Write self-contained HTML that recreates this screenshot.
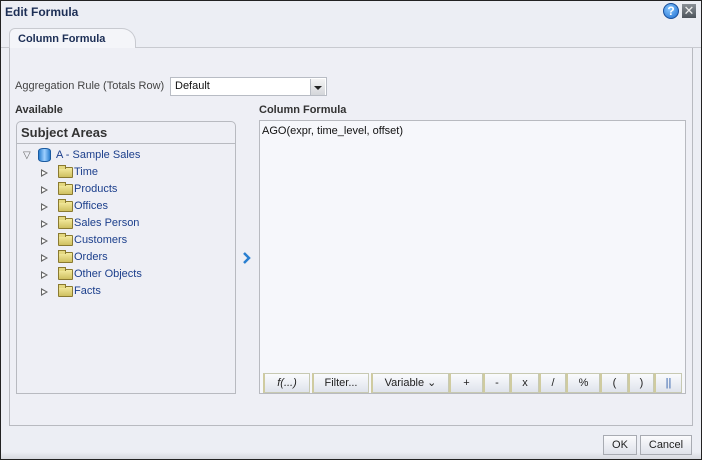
<!DOCTYPE html>
<html><head><style>
*{margin:0;padding:0;box-sizing:border-box}
body{width:702px;height:460px;overflow:hidden;background:#eceef4;font-family:"Liberation Sans",sans-serif;font-size:11px;color:#222;position:relative}
.a{position:absolute;white-space:nowrap}
.frame{left:0;top:0;width:702px;height:460px;border:1px solid #222}
.b{font-weight:bold;color:#333}
.btn{position:absolute;top:373px;height:20px;background:linear-gradient(#fafbfd,#dfe3ec);border:1px solid #c7c9b2;border-left:2px solid #cfcba0;text-align:center;line-height:18px;font-size:11px;color:#222}
.tree div{position:absolute;left:0;width:200px;white-space:nowrap;height:17px;line-height:17px;color:#1c3f8c;font-size:11px}
.tri{display:inline-block;width:0;height:0;border-top:4px solid transparent;border-bottom:4px solid transparent;border-left:7px solid #666;position:absolute;left:25px;top:5px}
.tri:after{content:"";position:absolute;left:-6px;top:-2px;border-top:2px solid transparent;border-bottom:2px solid transparent;border-left:4px solid #fff}
.fold{position:absolute;left:42px;top:3px;width:15px;height:11px;background:linear-gradient(#f4eba0,#cfc060);border:1px solid #8a7a30;border-radius:1px}
.fold:before{content:"";position:absolute;left:-1px;top:-3px;width:6px;height:3px;background:#e4d880;border:1px solid #8a7a30;border-bottom:none}
.lbl{position:absolute;left:58px;top:0;white-space:nowrap}
</style></head><body>
<div class="a frame"></div>
<div class="a" style="left:1px;top:1px;width:700px;height:22px;background:#eceef4"></div>
<div class="a b" style="left:5px;top:5px;font-size:12px;color:#1c2e55">Edit Formula</div>
<div class="a" style="left:663px;top:3px;width:16px;height:16px;border-radius:50%;background:radial-gradient(circle at 40% 35%,#8ac8ff,#1a6cd0);border:1px solid #1a4f9a;color:#fff;font-weight:bold;font-size:12px;text-align:center;line-height:14px">?</div>
<div class="a" style="left:682px;top:4px;width:14px;height:14px;background:linear-gradient(#8a9097,#4d545b);color:#eee;font-size:13px;text-align:center;line-height:13px">✕</div>
<div class="a" style="left:1px;top:47px;width:700px;height:1px;background:#c8cad0"></div>
<div class="a" style="left:9px;top:28px;width:127px;height:21px;background:#f4f5f9;border:1px solid #c8cad0;border-bottom:none;border-radius:6px 14px 0 0"></div>
<div class="a b" style="left:18px;top:33px;color:#1c2e55">Column Formula</div>
<div class="a" style="left:9px;top:48px;width:684px;height:378px;border:1px solid #b8bac0;border-top:none;background:#eeeff5"></div>
<div class="a" style="left:15px;top:80px;color:#444">Aggregation Rule (Totals Row)</div>
<div class="a" style="left:170px;top:77px;width:157px;height:19px;background:#fff;border:1px solid #b8bcc4"></div>
<div class="a" style="left:175px;top:80px;color:#111">Default</div>
<div class="a" style="left:310px;top:79px;width:15px;height:16px;background:linear-gradient(#f4f4f4,#d4d6da);border-left:1px solid #b8bcc4"></div>
<div class="a" style="left:314px;top:86px;border-left:4px solid transparent;border-right:4px solid transparent;border-top:4px solid #222"></div>
<div class="a b" style="left:15px;top:104px">Available</div>
<div class="a b" style="left:259px;top:104px">Column Formula</div>
<div class="a" style="left:16px;top:121px;width:220px;height:273px;border:1px solid #b8bac0;border-radius:5px 5px 0 0;background:#eeeff5"></div>
<div class="a" style="left:17px;top:143px;width:218px;height:1px;background:#b8bac0"></div>
<div class="a b" style="left:21px;top:125px;font-size:13px">Subject Areas</div>
<div class="a" style="left:23px;top:150px;color:#666;font-size:10px">▽</div>
<div class="a" style="left:38px;top:148px;width:13px;height:14px;background:linear-gradient(90deg,#2a7fd0,#9ed0ff,#2a7fd0);border:1px solid #1a5aa0;border-radius:5px/3px"></div>
<div class="a" style="left:56px;top:149px;color:#1c3f8c">A - Sample Sales</div>
<div class="a tree" style="left:16px;top:164px;width:200px;height:140px">
<div style="top:0"><span class="tri"></span><span class="fold"></span><span class="lbl">Time</span></div>
<div style="top:17px"><span class="tri"></span><span class="fold"></span><span class="lbl">Products</span></div>
<div style="top:34px"><span class="tri"></span><span class="fold"></span><span class="lbl">Offices</span></div>
<div style="top:51px"><span class="tri"></span><span class="fold"></span><span class="lbl">Sales Person</span></div>
<div style="top:68px"><span class="tri"></span><span class="fold"></span><span class="lbl">Customers</span></div>
<div style="top:85px"><span class="tri"></span><span class="fold"></span><span class="lbl">Orders</span></div>
<div style="top:102px"><span class="tri"></span><span class="fold"></span><span class="lbl">Other Objects</span></div>
<div style="top:119px"><span class="tri"></span><span class="fold"></span><span class="lbl">Facts</span></div>
</div>
<svg class="a" style="left:241px;top:251px" width="12" height="14"><path d="M3 2 L8 7 L3 12" stroke="#2a7fd0" stroke-width="2.5" fill="none"/></svg>
<div class="a" style="left:259px;top:120px;width:427px;height:274px;border:1px solid #b8bac0;background:#f6f7fb"></div>
<div class="a" style="left:262px;top:125px;color:#111">AGO(expr, time_level, offset)</div>
<div class="btn" style="left:263px;width:47px;font-style:italic">f(...)</div>
<div class="btn" style="left:312px;width:57px">Filter...</div>
<div class="btn" style="left:371px;width:78px">Variable ⌄</div>
<div class="btn" style="left:449px;width:34px">+</div>
<div class="btn" style="left:483px;width:27px">-</div>
<div class="btn" style="left:510px;width:29px">x</div>
<div class="btn" style="left:539px;width:27px">/</div>
<div class="btn" style="left:566px;width:34px">%</div>
<div class="btn" style="left:600px;width:28px">(</div>
<div class="btn" style="left:628px;width:26px">)</div>
<div class="btn" style="left:654px;width:28px;color:#2a5aa8">||</div>
<div class="a" style="left:1px;top:452px;width:700px;height:7px;background:linear-gradient(#eceef4,#d6d8de)"></div>
<div class="a" style="left:603px;top:435px;width:34px;height:20px;border:1px solid #a8abb2;background:linear-gradient(#fbfbfd,#dfe2ea);text-align:center;line-height:18px">OK</div>
<div class="a" style="left:640px;top:435px;width:52px;height:20px;border:1px solid #a8abb2;background:linear-gradient(#fbfbfd,#dfe2ea);text-align:center;line-height:18px">Cancel</div>
</body></html>
